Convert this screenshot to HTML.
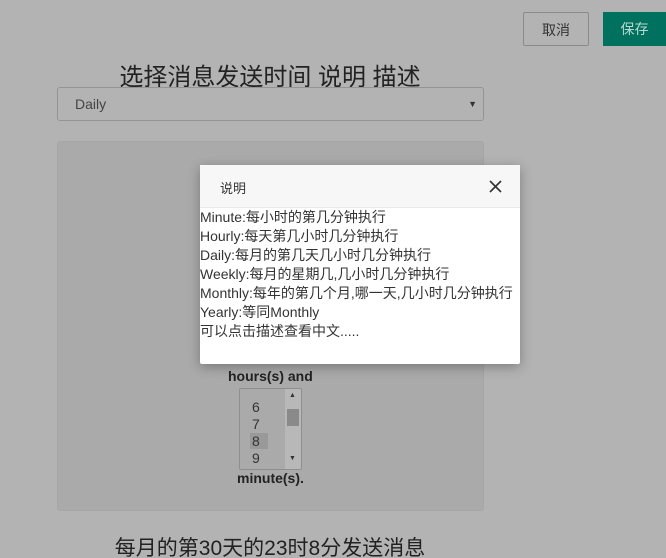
<!DOCTYPE html>
<html><head><meta charset="utf-8"><style>
html,body{margin:0;width:666px;height:558px;overflow:hidden}
body{background:#b3b3b3;font-family:"Liberation Sans","Noto Sans CJK SC",sans-serif;position:relative;color:#222}
.a{position:absolute}
.btn{top:12px;height:34px;font-size:14px;line-height:34px;text-align:center;box-sizing:border-box}
</style></head><body>
<div class="a btn" style="left:523px;width:66px;border:1px solid #8a8a8a;border-radius:2px;color:#333">取消</div>
<div class="a btn" style="left:603px;width:63px;background:#00705f;color:#b8d8d0">保存</div>
<div class="a" style="left:0;width:540px;top:57px;text-align:center;font-size:24px;color:#222">选择消息发送时间 说明 描述</div>
<div class="a" style="left:57px;top:87px;width:425px;height:32px;border:1px solid #949494;border-radius:3px;font-size:14px;line-height:32px;color:#444"><span style="margin-left:17px">Daily</span><span style="position:absolute;right:6px;font-size:9px;color:#333">▼</span></div>
<div class="a" style="left:57px;top:141px;width:425px;height:368px;border:1px solid #a6a6a6;border-radius:3px;background:#aaaaaa"></div>
<div class="a" style="left:228px;top:368px;font-size:14px;font-weight:bold;color:#222">hours(s) and</div>
<div class="a" style="left:239px;top:388px;width:61px;height:80px;border:1px solid #8e8e8e;border-radius:2px;overflow:hidden;font-size:14px;color:#333">
<div class="a" style="left:12px;top:10px;line-height:17px">6<br>7<br><span style="background:#999;padding:0 8px 0 2px;margin-left:-2px">8</span><br>9</div>
<div class="a" style="left:45px;top:0;width:16px;height:80px;background:#b8b8b8"></div>
<div class="a" style="left:47px;top:20px;width:12px;height:17px;background:#8a8a8a"></div>
<div class="a" style="left:49px;top:3px;font-size:7px">▲</div><div class="a" style="left:49px;top:66px;font-size:7px">▼</div>
</div>
<div class="a" style="left:237px;top:470px;font-size:14px;font-weight:bold;color:#222">minute(s).</div>
<div class="a" style="left:0;width:540px;top:532px;text-align:center;font-size:21px;color:#222">每月的第30天的23时8分发送消息</div>
<div class="a" style="left:200px;top:165px;width:320px;height:199px;background:#fff;box-shadow:0 3px 12px rgba(0,0,0,.3);border-radius:2px">
<div style="height:42px;background:#f7f7f7;border-bottom:1px solid #e8e8e8;position:relative"><span class="a" style="left:20px;top:13px;font-size:13px;color:#333">说明</span>
<svg class="a" style="left:289px;top:15px" width="13" height="13"><path d="M1 1L12 12M12 1L1 12" stroke="#333" stroke-width="1.6"/></svg></div>
<div style="font-size:14px;line-height:19px;color:#333">Minute:每小时的第几分钟执行<br>Hourly:每天第几小时几分钟执行<br>Daily:每月的第几天几小时几分钟执行<br>Weekly:每月的星期几,几小时几分钟执行<br>Monthly:每年的第几个月,哪一天,几小时几分钟执行<br>Yearly:等同Monthly<br>可以点击描述查看中文.....</div>
</div>
</body></html>
